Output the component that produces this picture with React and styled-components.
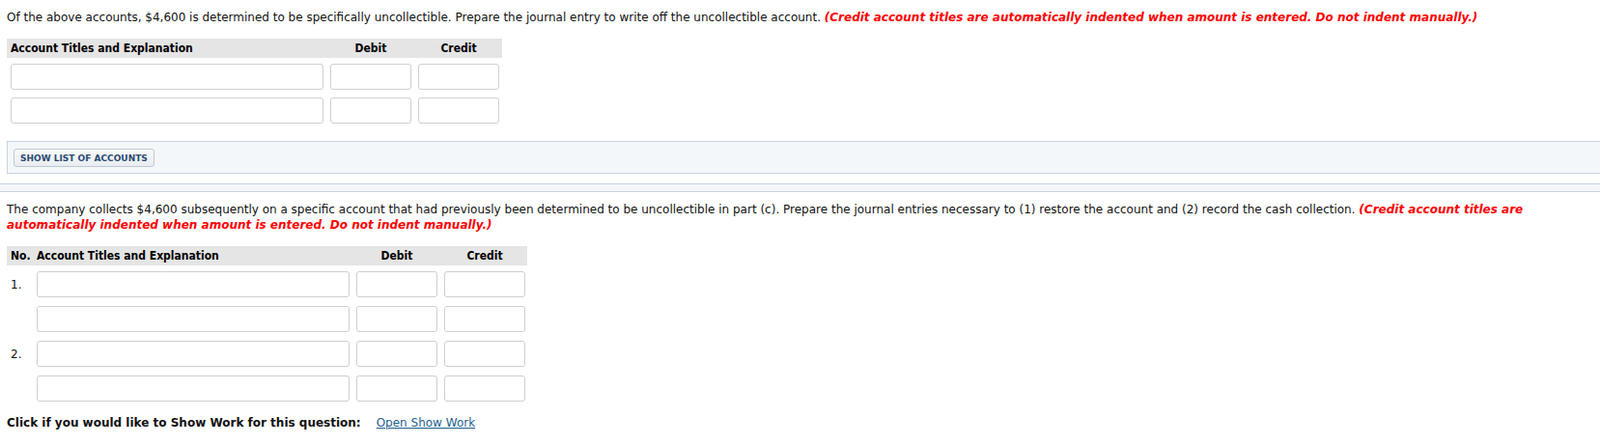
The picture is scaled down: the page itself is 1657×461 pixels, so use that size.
import styled, { createGlobalStyle } from "styled-components";

const GlobalStyle = createGlobalStyle`
  body {
    margin: 0;
    background: #fff;
    color: #111;
    font-family: "DejaVu Sans", Verdana, sans-serif;
    font-size: 12px;
  }
`;

const Section = styled.div`
  padding-left: 7px;
`;

const Prompt = styled.p`
  margin: ${(p) => p.$top || 10}px 0 0;
  line-height: 16px;
  padding-right: 60px;
`;

const Note = styled.span`
  color: #f00;
  font-weight: bold;
  font-style: italic;
`;

const Journal = styled.div`
  width: ${(p) => p.$width}px;
  margin-top: 14px;
`;

const HeaderRow = styled.div`
  display: flex;
  align-items: center;
  height: 20px;
  padding-left: 4px;
  background: #e5e5e5;
  font-family: "DejaVu Sans Condensed", Tahoma, sans-serif;
  font-weight: bold;
  font-size: 12px;
  color: #000;
`;

const HeadCell = styled.div`
  width: ${(p) => p.$w}px;
  margin-right: ${(p) => p.$gap || 0}px;
  text-align: ${(p) => (p.$center ? "center" : "left")};
  flex-shrink: 0;
`;

const Rows = styled.div`
  display: flex;
  flex-direction: column;
  gap: ${(p) => p.$gap}px;
  margin-top: 6px;
`;

const Row = styled.div`
  display: flex;
  align-items: center;
  padding-left: 4px;
`;

const Num = styled.div`
  width: 27px;
  flex-shrink: 0;
  font-size: 12px;
  color: #111;
`;

const Field = styled.input`
  box-sizing: border-box;
  width: ${(p) => p.$w}px;
  height: 27px;
  margin-right: ${(p) => p.$gap || 0}px;
  border: 1px solid #cfcfcf;
  border-radius: 3px;
  background: #fff;
  flex-shrink: 0;
  padding: 0 4px;
  font: inherit;
`;

const AccountsBar = styled.div`
  margin-top: 18px;
  padding: 7px 6px 6px;
  background: #f4f7fa;
  border: 1px solid #c9d2de;
  border-right: none;
`;

const AccountsButton = styled.button`
  display: block;
  height: 19px;
  padding: 0 6px;
  border: 1px solid #bfc9d4;
  border-radius: 3px;
  background: linear-gradient(#f8f9fb, #e9edf1);
  color: #2b4a72;
  font-family: "DejaVu Sans", Verdana, sans-serif;
  font-weight: bold;
  font-size: 9px;
  cursor: pointer;
`;

const Divider = styled.div`
  margin-top: 10px;
  height: 7px;
  background: #f4f7fa;
  border-top: 1px solid #c9d2de;
  border-bottom: 1px solid #c9d2de;
`;

const ShowWork = styled.div`
  display: flex;
  align-items: center;
  margin-top: 15px;
  line-height: 15px;
`;

const ShowWorkLabel = styled.span`
  font-weight: bold;
  color: #111;
`;

const ShowWorkLink = styled.a`
  margin-left: 16px;
  color: #1f5f8f;
  text-decoration: underline;
  cursor: pointer;
`;

const entries = [
  { no: "1.", lines: 2 },
  { no: "2.", lines: 2 },
];

const App = () => {
  return (
    <>
      <GlobalStyle />
      <Section>
        <Prompt>
          Of the above accounts, $4,600 is determined to be specifically uncollectible. Prepare the journal entry to
          write off the uncollectible account.{" "}
          <Note>(Credit account titles are automatically indented when amount is entered. Do not indent manually.)</Note>
        </Prompt>
        <Journal $width={513}>
          <HeaderRow>
            <HeadCell $w={324} $gap={7}>Account Titles and Explanation</HeadCell>
            <HeadCell $w={84} $gap={7} $center>Debit</HeadCell>
            <HeadCell $w={84} $center>Credit</HeadCell>
          </HeaderRow>
          <Rows $gap={8}>
            {[0, 1].map((i) => (
              <Row key={i}>
                <Field $w={324} $gap={7} />
                <Field $w={84} $gap={7} />
                <Field $w={84} />
              </Row>
            ))}
          </Rows>
        </Journal>
        <AccountsBar>
          <AccountsButton>SHOW LIST OF ACCOUNTS</AccountsButton>
        </AccountsBar>
      </Section>
      <Divider />
      <Section>
        <Prompt $top={10}>
          The company collects $4,600 subsequently on a specific account that had previously been determined to be
          uncollectible in part (c). Prepare the journal entries necessary to (1) restore the account and (2) record the
          cash collection.{" "}
          <Note>(Credit account titles are automatically indented when amount is entered. Do not indent manually.)</Note>
        </Prompt>
        <Journal $width={539}>
          <HeaderRow>
            <HeadCell $w={27}>No.</HeadCell>
            <HeadCell $w={324} $gap={7}>Account Titles and Explanation</HeadCell>
            <HeadCell $w={84} $gap={7} $center>Debit</HeadCell>
            <HeadCell $w={84} $center>Credit</HeadCell>
          </HeaderRow>
          <Rows $gap={9}>
            {entries.map((entry) =>
              Array.from({ length: entry.lines }).map((_, i) => (
                <Row key={entry.no + i}>
                  <Num>{i === 0 ? entry.no : ""}</Num>
                  <Field $w={324} $gap={7} />
                  <Field $w={84} $gap={7} />
                  <Field $w={84} />
                </Row>
              ))
            )}
          </Rows>
        </Journal>
        <ShowWork>
          <ShowWorkLabel>Click if you would like to Show Work for this question:</ShowWorkLabel>
          <ShowWorkLink>Open Show Work</ShowWorkLink>
        </ShowWork>
      </Section>
    </>
  );
};

export default App;
